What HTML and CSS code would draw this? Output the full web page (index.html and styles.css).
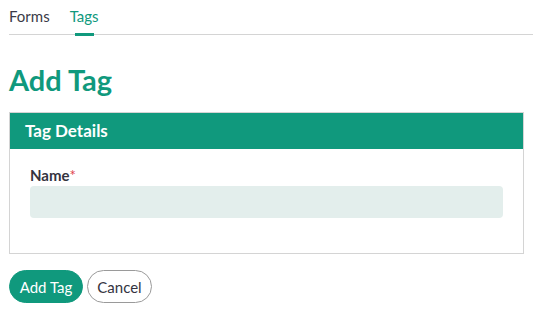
FILE: index.html
```html
<!DOCTYPE html>
<html>
<head>
<meta charset="utf-8">
<link rel="stylesheet" href="styles.css">
</head>
<body>
<nav class="tabs">
  <a class="tab">Forms</a>
  <a class="tab active">Tags</a>
</nav>
<h1 class="title">Add Tag</h1>
<section class="card">
  <header class="card-head">Tag Details</header>
  <div class="card-body">
    <label class="label">Name<span class="req">*</span></label>
    <div class="input"></div>
  </div>
</section>
<div class="actions">
  <button class="btn primary">Add Tag</button>
  <button class="btn secondary">Cancel</button>
</div>
</body>
</html>
```
FILE: styles.css
```css
html, body { margin: 0; padding: 0; background: #fff; }
body {
  font-family: "Lato", "Noto Sans", sans-serif;
  color: #34343f;
  padding-left: 9px;
}
.tabs {
  display: flex;
  gap: 20px;
  border-bottom: 1px solid #d4d4d4;
  height: 35px;
  box-sizing: border-box;
  padding-top: 6px;
}
.tab {
  font-size: 15px;
  line-height: 20px;
  color: #3a3a48;
  position: relative;
}
.tab.active { color: #10997d; }
.tab.active::after {
  content: "";
  position: absolute;
  left: 5px;
  right: 5px;
  top: 27px;
  height: 3px;
  background: #10997d;
}
.title {
  margin: 27px 0 0 0;
  font-size: 29px;
  line-height: 36px;
  font-weight: 700;
  color: #10997d;
}
.card {
  margin-top: 14px;
  width: 515px;
  box-sizing: border-box;
  border: 1px solid #d4d4d4;
  height: 142px;
}
.card-head {
  background: #10997d;
  color: #fff;
  font-weight: 700;
  font-size: 17px;
  height: 36px;
  line-height: 36px;
  padding-left: 15px;
}
.card-body {
  padding: 16px 20px 0 20px;
}
.label {
  display: block;
  font-weight: 700;
  font-size: 15px;
  line-height: 20px;
  color: #34343f;
}
.req { color: #e0404a; font-weight: 400; }
.input {
  margin-top: 1px;
  height: 32px;
  width: 473px;
  background: #e3eeec;
  border-radius: 4px;
}
.actions {
  display: flex;
  gap: 4px;
  margin-top: 16px;
}
.btn {
  font-family: "Lato", "Noto Sans", sans-serif;
  font-size: 15px;
  height: 33px;
  border-radius: 17px;
  padding: 0;
  margin: 0;
  white-space: nowrap;
}
.primary {
  background: #10997d;
  color: #fff;
  border: 1px solid #10997d;
  width: 74px;
}
.secondary {
  background: #fff;
  color: #34343f;
  border: 1px solid #9a9a9a;
  width: 65px;
}
```
